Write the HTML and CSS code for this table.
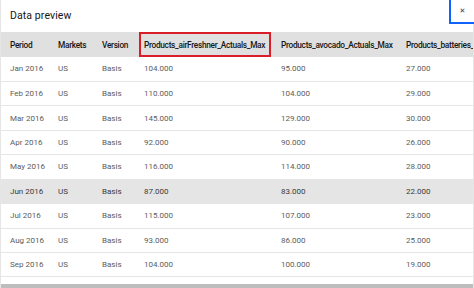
FILE: index.html
```html
<!DOCTYPE html>
<html lang="en">
<head>
  <meta charset="UTF-8"/>
  <title>Data preview</title>
  <link rel="stylesheet" href="styles.css">
</head>
<body>
  <div class="modal">
    <!-- Header -->
    <div class="modal-head">
      <h1>Data preview</h1>
      <button class="close" aria-label="Close">&#x2715;</button>
    </div>

    <!-- Table -->
    <div class="table-wrap">
      <table class="preview">
        <colgroup>
          <col class="c-period"><col class="c-markets"><col class="c-version">
          <col class="c-air"><col class="c-avo"><col class="c-bat">
        </colgroup>
        <thead>
          <tr>
            <th>Period</th>
            <th>Markets</th>
            <th>Version</th>
            <th class="marked"><div class="mark">Products_airFreshner_Actuals_Max</div></th>
            <th>Products_avocado_Actuals_Max</th>
            <th>Products_batteries_Actuals_Max</th>
          </tr>
        </thead>
        <tbody>
          <tr><td>Jan 2016</td><td>US</td><td>Basis</td><td>104.000</td><td>95.000</td><td>27.000</td></tr>
          <tr><td>Feb 2016</td><td>US</td><td>Basis</td><td>110.000</td><td>104.000</td><td>29.000</td></tr>
          <tr><td>Mar 2016</td><td>US</td><td>Basis</td><td>145.000</td><td>129.000</td><td>30.000</td></tr>
          <tr><td>Apr 2016</td><td>US</td><td>Basis</td><td>92.000</td><td>90.000</td><td>26.000</td></tr>
          <tr><td>May 2016</td><td>US</td><td>Basis</td><td>116.000</td><td>114.000</td><td>28.000</td></tr>
          <tr class="hover"><td>Jun 2016</td><td>US</td><td>Basis</td><td>87.000</td><td>83.000</td><td>22.000</td></tr>
          <tr><td>Jul 2016</td><td>US</td><td>Basis</td><td>115.000</td><td>107.000</td><td>23.000</td></tr>
          <tr><td>Aug 2016</td><td>US</td><td>Basis</td><td>93.000</td><td>86.000</td><td>25.000</td></tr>
          <tr><td>Sep 2016</td><td>US</td><td>Basis</td><td>104.000</td><td>100.000</td><td>19.000</td></tr>
        </tbody>
      </table>
    </div>
    <div class="hscroll"></div>
  </div>
</body>
</html>
```

FILE: styles.css
```css
:root{
  --text: #161616;
  --muted: #5c5c5c;
  --line: #e6e6e6;
  --head: #e0e0e0;
  --blue: #0f62fe;
  --red: #da1e28;
}
* { box-sizing: border-box; margin: 0; }
html, body { height: 100%; }
body {
  font-family: Roboto, "Liberation Sans", sans-serif;
  background: #fff;
  color: var(--text);
  overflow: hidden;
}

.modal {
  height: 288px;
  display: flex;
  flex-direction: column;
  border-left: 1px solid var(--line);
  border-right: 1px solid var(--line);
}

/* Header */
.modal-head {
  height: 32px;
  display: flex;
  justify-content: space-between;
  align-items: flex-start;
  padding-left: 9px;
}
.modal-head h1 {
  font-size: 10.5px;
  font-weight: 400;
  line-height: 14px;
  padding-top: 9px;
  letter-spacing: .1px;
}
.close {
  width: 25px; height: 24px;
  margin-right: -1px;
  background: #fff;
  border: 2px solid var(--blue);
  border-top: 0; border-right: 0;
  color: #393939;
  font-size: 7px;
  font-family: "DejaVu Sans", sans-serif;
  padding: 0;
}

/* Table */
.table-wrap { flex: 1; overflow: hidden; }
.preview {
  table-layout: fixed;
  border-collapse: collapse;
  width: 520px;
  font-size: 8px;
  white-space: nowrap;
}
.c-period { width: 47px; }
.c-markets { width: 44px; }
.c-version { width: 42px; }
.c-air { width: 137px; }
.c-avo { width: 125px; }
.c-bat { width: 125px; }

.preview th {
  background: var(--head);
  font-size: 8.3px;
  font-weight: 500;
  letter-spacing: -.3px;
  text-align: left;
  height: 25px;
  padding: 0 0 0 10px;
}
.preview th:first-child,
.preview td:first-child { padding-left: 9px; }
.preview th.marked { padding: 0 0 0 5px; }
.mark {
  height: 25px;
  border: 2px solid var(--red);
  padding-left: 3px;
  display: flex;
  align-items: center;
}
.preview td {
  color: var(--muted);
  height: 24.44px;
  padding: 0 0 0 10px;
  border-bottom: 1px solid var(--line);
}
.preview tr.hover td { background: #e5e5e5; color: #393939; }

.hscroll {
  height: 4px;
  background: #bdbdbd;
}
```
